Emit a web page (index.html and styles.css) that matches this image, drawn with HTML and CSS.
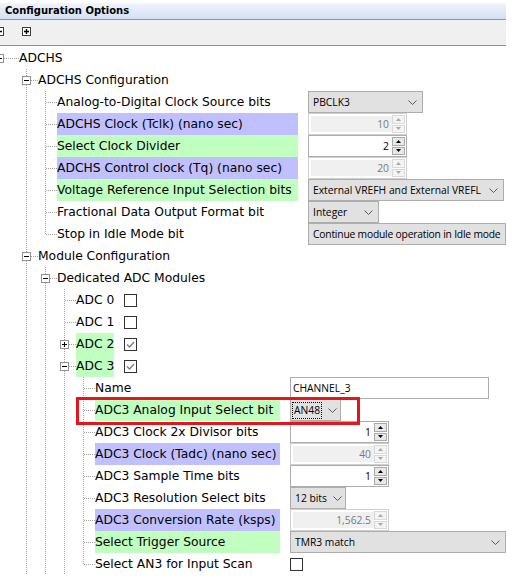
FILE: index.html
```html
<!doctype html>
<html lang="en">
<head>
	<meta charset="utf-8" />
	<title>
		Configuration Options
	</title>

	<link rel="stylesheet" href="styles.css">
</head>
<body>

	<!-- BEGIN: Panel. -->
	<section class="panel">

		<div class="panel__title">
			Configuration Options
		</div>

		<div class="panel__toolbar">
			<svg class="tool-btn tool-btn--first" width="9" height="9" viewBox="0 0 9 9">
				<rect x="0.5" y="0.5" width="8" height="8" fill="#ffffff" stroke="#3c3c3c" />
				<path d="M2 4.5 H7" stroke="#000000" stroke-width="1.4" />
			</svg>
			<svg class="tool-btn" width="9" height="9" viewBox="0 0 9 9">
				<rect x="0.5" y="0.5" width="8" height="8" fill="#ffffff" stroke="#3c3c3c" />
				<path d="M2 4.5 H7 M4.5 2 V7" stroke="#000000" stroke-width="1.4" />
			</svg>
		</div>

		<!-- BEGIN: Tree. -->
		<ul class="tree">
			<li class="tree__item tree__item--root">
				<div class="node node--root">
					<svg class="toggle" width="9" height="9" viewBox="0 0 9 9"><rect x="0.5" y="0.5" width="8" height="8" fill="#ffffff" stroke="#919191" /><path d="M2 4.5 H7" stroke="#000000" /></svg>
					<span class="node__label">ADCHS</span>
				</div>

				<ul>
					<li class="tree__item">
						<div class="node">
							<svg class="toggle" width="9" height="9" viewBox="0 0 9 9"><rect x="0.5" y="0.5" width="8" height="8" fill="#ffffff" stroke="#919191" /><path d="M2 4.5 H7" stroke="#000000" /></svg>
							<span class="node__label">ADCHS Configuration</span>
						</div>

						<ul class="props">
							<li class="tree__item">
								<div class="node">
									<span class="node__label">Analog-to-Digital Clock Source bits</span>
									<div class="node__value">
										<span class="combo combo--clock">
											PBCLK3
											<svg class="combo__arrow" width="9" height="5" viewBox="0 0 9 5"><polyline points="0.5,0.5 4.5,4.5 8.5,0.5" fill="none" stroke="#5a5a5a" /></svg>
										</span>
									</div>
								</div>
							</li>
							<li class="tree__item">
								<div class="node">
									<span class="node__label node__label--calc">ADCHS Clock (Tclk) (nano sec)</span>
									<div class="node__value">
										<span class="spin spin--off">
											<span class="spin__field">10</span>
											<span class="spin__buttons">
												<span class="spin__btn"><svg width="5" height="3" viewBox="0 0 5 3"><polygon points="0,3 2.5,0 5,3" /></svg></span>
												<span class="spin__btn"><svg width="5" height="3" viewBox="0 0 5 3"><polygon points="0,0 5,0 2.5,3" /></svg></span>
											</span>
										</span>
									</div>
								</div>
							</li>
							<li class="tree__item">
								<div class="node">
									<span class="node__label node__label--set">Select Clock Divider</span>
									<div class="node__value">
										<span class="spin">
											<span class="spin__field">2</span>
											<span class="spin__buttons">
												<span class="spin__btn"><svg width="5" height="3" viewBox="0 0 5 3"><polygon points="0,3 2.5,0 5,3" /></svg></span>
												<span class="spin__btn"><svg width="5" height="3" viewBox="0 0 5 3"><polygon points="0,0 5,0 2.5,3" /></svg></span>
											</span>
										</span>
									</div>
								</div>
							</li>
							<li class="tree__item">
								<div class="node">
									<span class="node__label node__label--calc">ADCHS Control clock (Tq) (nano sec)</span>
									<div class="node__value">
										<span class="spin spin--off">
											<span class="spin__field">20</span>
											<span class="spin__buttons">
												<span class="spin__btn"><svg width="5" height="3" viewBox="0 0 5 3"><polygon points="0,3 2.5,0 5,3" /></svg></span>
												<span class="spin__btn"><svg width="5" height="3" viewBox="0 0 5 3"><polygon points="0,0 5,0 2.5,3" /></svg></span>
											</span>
										</span>
									</div>
								</div>
							</li>
							<li class="tree__item">
								<div class="node">
									<span class="node__label node__label--set">Voltage Reference Input Selection bits</span>
									<div class="node__value">
										<span class="combo combo--vref">
											External VREFH and External VREFL
											<svg class="combo__arrow" width="9" height="5" viewBox="0 0 9 5"><polyline points="0.5,0.5 4.5,4.5 8.5,0.5" fill="none" stroke="#5a5a5a" /></svg>
										</span>
									</div>
								</div>
							</li>
							<li class="tree__item">
								<div class="node">
									<span class="node__label">Fractional Data Output Format bit</span>
									<div class="node__value">
										<span class="combo combo--format">
											Integer
											<svg class="combo__arrow" width="9" height="5" viewBox="0 0 9 5"><polyline points="0.5,0.5 4.5,4.5 8.5,0.5" fill="none" stroke="#5a5a5a" /></svg>
										</span>
									</div>
								</div>
							</li>
							<li class="tree__item tree__item--last">
								<div class="node">
									<span class="node__label">Stop in Idle Mode bit</span>
									<div class="node__value">
										<span class="combo combo--idle">
											Continue module operation in Idle mode
										</span>
									</div>
								</div>
							</li>
						</ul>
					</li>

					<li class="tree__item">
						<div class="node">
							<svg class="toggle" width="9" height="9" viewBox="0 0 9 9"><rect x="0.5" y="0.5" width="8" height="8" fill="#ffffff" stroke="#919191" /><path d="M2 4.5 H7" stroke="#000000" /></svg>
							<span class="node__label">Module Configuration</span>
						</div>

						<ul>
							<li class="tree__item">
								<div class="node">
									<svg class="toggle" width="9" height="9" viewBox="0 0 9 9"><rect x="0.5" y="0.5" width="8" height="8" fill="#ffffff" stroke="#919191" /><path d="M2 4.5 H7" stroke="#000000" /></svg>
									<span class="node__label">Dedicated ADC Modules</span>
								</div>

								<ul>
									<li class="tree__item">
										<div class="node">
											<span class="node__label node__label--fit">ADC 0</span>
											<svg class="check" width="13" height="13" viewBox="0 0 13 13"><rect x="0.5" y="0.5" width="12" height="12" fill="#ffffff" stroke="#333333" /></svg>
										</div>
									</li>
									<li class="tree__item">
										<div class="node">
											<span class="node__label node__label--fit">ADC 1</span>
											<svg class="check" width="13" height="13" viewBox="0 0 13 13"><rect x="0.5" y="0.5" width="12" height="12" fill="#ffffff" stroke="#333333" /></svg>
										</div>
									</li>
									<li class="tree__item">
										<div class="node">
											<svg class="toggle" width="9" height="9" viewBox="0 0 9 9"><rect x="0.5" y="0.5" width="8" height="8" fill="#ffffff" stroke="#919191" /><path d="M2 4.5 H7 M4.5 2 V7" stroke="#000000" /></svg>
											<span class="node__label node__label--fit node__label--set">ADC 2</span>
											<svg class="check" width="13" height="13" viewBox="0 0 13 13"><rect x="0.5" y="0.5" width="12" height="12" fill="#ffffff" stroke="#333333" /><polyline points="3,6.5 5.5,9 10,4" fill="none" stroke="#7c7c7c" stroke-width="1.3" /></svg>
										</div>
									</li>
									<li class="tree__item">
										<div class="node">
											<svg class="toggle" width="9" height="9" viewBox="0 0 9 9"><rect x="0.5" y="0.5" width="8" height="8" fill="#ffffff" stroke="#919191" /><path d="M2 4.5 H7" stroke="#000000" /></svg>
											<span class="node__label node__label--fit node__label--set">ADC 3</span>
											<svg class="check" width="13" height="13" viewBox="0 0 13 13"><rect x="0.5" y="0.5" width="12" height="12" fill="#ffffff" stroke="#333333" /><polyline points="3,6.5 5.5,9 10,4" fill="none" stroke="#7c7c7c" stroke-width="1.3" /></svg>
										</div>

										<ul class="props props--adc">
											<li class="tree__item">
												<div class="node">
													<span class="node__label">Name</span>
													<div class="node__value">
														<span class="text-field">CHANNEL_3</span>
													</div>
												</div>
											</li>
											<li class="tree__item">
												<div class="node node--marked">
													<span class="node__label node__label--set">ADC3 Analog Input Select bit</span>
													<div class="node__value">
														<span class="combo combo--input">
															<span class="combo__focus">AN48</span>
															<svg class="combo__arrow" width="9" height="5" viewBox="0 0 9 5"><polyline points="0.5,0.5 4.5,4.5 8.5,0.5" fill="none" stroke="#5a5a5a" /></svg>
														</span>
													</div>
													<span class="callout"></span>
												</div>
											</li>
											<li class="tree__item">
												<div class="node">
													<span class="node__label">ADC3 Clock 2x Divisor bits</span>
													<div class="node__value">
														<span class="spin">
															<span class="spin__field">1</span>
															<span class="spin__buttons">
																<span class="spin__btn"><svg width="5" height="3" viewBox="0 0 5 3"><polygon points="0,3 2.5,0 5,3" /></svg></span>
																<span class="spin__btn"><svg width="5" height="3" viewBox="0 0 5 3"><polygon points="0,0 5,0 2.5,3" /></svg></span>
															</span>
														</span>
													</div>
												</div>
											</li>
											<li class="tree__item">
												<div class="node">
													<span class="node__label node__label--calc">ADC3 Clock (Tadc) (nano sec)</span>
													<div class="node__value">
														<span class="spin spin--off">
															<span class="spin__field">40</span>
															<span class="spin__buttons">
																<span class="spin__btn"><svg width="5" height="3" viewBox="0 0 5 3"><polygon points="0,3 2.5,0 5,3" /></svg></span>
																<span class="spin__btn"><svg width="5" height="3" viewBox="0 0 5 3"><polygon points="0,0 5,0 2.5,3" /></svg></span>
															</span>
														</span>
													</div>
												</div>
											</li>
											<li class="tree__item">
												<div class="node">
													<span class="node__label">ADC3 Sample Time bits</span>
													<div class="node__value">
														<span class="spin">
															<span class="spin__field">1</span>
															<span class="spin__buttons">
																<span class="spin__btn"><svg width="5" height="3" viewBox="0 0 5 3"><polygon points="0,3 2.5,0 5,3" /></svg></span>
																<span class="spin__btn"><svg width="5" height="3" viewBox="0 0 5 3"><polygon points="0,0 5,0 2.5,3" /></svg></span>
															</span>
														</span>
													</div>
												</div>
											</li>
											<li class="tree__item">
												<div class="node">
													<span class="node__label">ADC3 Resolution Select bits</span>
													<div class="node__value">
														<span class="combo combo--bits">
															12 bits
															<svg class="combo__arrow" width="9" height="5" viewBox="0 0 9 5"><polyline points="0.5,0.5 4.5,4.5 8.5,0.5" fill="none" stroke="#5a5a5a" /></svg>
														</span>
													</div>
												</div>
											</li>
											<li class="tree__item">
												<div class="node">
													<span class="node__label node__label--calc">ADC3 Conversion Rate (ksps)</span>
													<div class="node__value">
														<span class="spin spin--off">
															<span class="spin__field">1,562.5</span>
															<span class="spin__buttons">
																<span class="spin__btn"><svg width="5" height="3" viewBox="0 0 5 3"><polygon points="0,3 2.5,0 5,3" /></svg></span>
																<span class="spin__btn"><svg width="5" height="3" viewBox="0 0 5 3"><polygon points="0,0 5,0 2.5,3" /></svg></span>
															</span>
														</span>
													</div>
												</div>
											</li>
											<li class="tree__item">
												<div class="node">
													<span class="node__label node__label--set">Select Trigger Source</span>
													<div class="node__value">
														<span class="combo combo--trigger">
															TMR3 match
															<svg class="combo__arrow" width="9" height="5" viewBox="0 0 9 5"><polyline points="0.5,0.5 4.5,4.5 8.5,0.5" fill="none" stroke="#5a5a5a" /></svg>
														</span>
													</div>
												</div>
											</li>
											<li class="tree__item tree__item--last">
												<div class="node">
													<span class="node__label">Select AN3 for Input Scan</span>
													<div class="node__value">
														<svg class="check check--value" width="13" height="13" viewBox="0 0 13 13"><rect x="0.5" y="0.5" width="12" height="12" fill="#ffffff" stroke="#333333" /></svg>
													</div>
												</div>
											</li>
										</ul>
									</li>
								</ul>
							</li>
						</ul>
					</li>
				</ul>
			</li>
		</ul>
		<!-- END: Tree. -->

	</section>
	<!-- END: Panel. -->

</body>
</html>
```

FILE: styles.css
```css
html {
	box-sizing: border-box ;
}

*, *:before, *:after {
	box-sizing: inherit ;
}

body {
	background-color: #ffffff ;
	color: #000000 ;
	margin: 0px 0px 0px 0px ;
	overflow: hidden ;
}

/* BEGIN: Panel chrome. */
.panel {
	padding: 3px 0px 0px 0px ;
	width: 506px ;
}

.panel__title {
	background-image: linear-gradient( to bottom, #f1f5fc, #d3dff4 ) ;
	border-bottom: 1px solid #8497b6 ;
	font: bold 10px "DejaVu Sans", sans-serif ;
	height: 17px ;
	line-height: 16px ;
	padding: 0px 0px 0px 5px ;
}

.panel__toolbar {
	align-items: flex-start ;
	background-color: #f0f0f0 ;
	border-bottom: 1px solid #8e8e8e ;
	display: flex ;
	gap: 18px ;
	height: 26px ;
	padding: 7px 0px 0px 0px ;
}

.tool-btn {
	display: block ;
	flex: none ;
}

.tool-btn--first {
	margin-left: -5px ;
}
/* END: Panel chrome. */

/* BEGIN: Tree. */
.tree,
.tree ul {
	list-style: none ;
	margin: 0px 0px 0px 0px ;
	padding: 0px 0px 0px 0px ;
}

.tree {
	font: 12.3px "DejaVu Sans", sans-serif ;
	overflow: hidden ;
	padding-top: 1px ;
}

.tree ul {
	margin-left: 19px ;
}

.tree > li > ul {
	margin-left: 26px ;
}

/* The vertical guide runs the whole item, the last one stops at its own row. */
.tree__item {
	background-image: repeating-linear-gradient( to bottom, #a0a0a0 0px, #a0a0a0 1px, transparent 1px, transparent 2px ) ;
	background-position: 0px 0px ;
	background-repeat: no-repeat ;
	background-size: 1px 100% ;
}

.tree__item--last {
	background-size: 1px 12px ;
}

.tree__item--root {
	background-image: none ;
}

.node {
	align-items: center ;
	background-image: repeating-linear-gradient( to right, #a0a0a0 0px, #a0a0a0 1px, transparent 1px, transparent 2px ) ;
	background-position: 1px 11px ;
	background-repeat: no-repeat ;
	background-size: 11px 1px ;
	display: flex ;
	height: 22px ;
	padding-left: 12px ;
	white-space: nowrap ;
}

.node--root {
	background-size: 19px 1px ;
	background-position: 0px 11px ;
	padding-left: 0px ;
}

.toggle {
	display: block ;
	flex: none ;
	margin: 0px 7px 0px -16px ;
}

.node--root .toggle {
	margin: 0px 15px 0px -5px ;
}

.node__label {
	align-self: stretch ;
	flex: 1 1 auto ;
	line-height: 22px ;
	min-width: 0px ;
	overflow: hidden ;
}

.node__label--fit {
	flex: 0 0 auto ;
}

.node__label--calc {
	background-color: #c0c0ff ;
}

.node__label--set {
	background-color: #c0ffc0 ;
}

.check {
	display: block ;
	flex: none ;
	margin-left: 10px ;
}

.check--value {
	margin-left: 0px ;
}
/* END: Tree. */

/* BEGIN: Value editors. */
.node__value {
	align-items: center ;
	display: flex ;
	flex: none ;
	font: 10.3px "Open Sans", sans-serif ;
	height: 22px ;
	margin-left: 10px ;
	width: 198px ;
}

.props--adc .node__value {
	width: 216px ;
}

.combo {
	align-items: center ;
	background-color: #e1e1e1 ;
	border: 1px solid #adadad ;
	display: flex ;
	height: 22px ;
	justify-content: space-between ;
	overflow: hidden ;
	padding: 0px 5px 0px 4px ;
}

.combo__arrow {
	display: block ;
	flex: none ;
	margin-left: 6px ;
}

.combo--clock {
	width: 115px ;
}

.combo--vref {
	width: 196px ;
}

.combo--format {
	width: 71px ;
}

.combo--idle {
	letter-spacing: -0.2px ;
	padding-right: 2px ;
	width: 198px ;
}

.combo--input {
	padding-left: 1px ;
	width: 51px ;
}

.combo--bits {
	width: 56px ;
}

.combo--trigger {
	width: 216px ;
}

.combo__focus {
	border: 1px dotted #000000 ;
	line-height: 15px ;
	padding: 0px 1px 0px 1px ;
}

.text-field {
	align-items: center ;
	background-color: #ffffff ;
	border: 1px solid #adadad ;
	display: flex ;
	height: 22px ;
	padding: 0px 0px 0px 2px ;
	width: 199px ;
}

.spin {
	background-color: #ffffff ;
	border: 1px solid #adadad ;
	display: flex ;
	height: 22px ;
	width: 99px ;
}

.spin__field {
	align-items: center ;
	display: flex ;
	flex: 1 1 auto ;
	justify-content: flex-end ;
	padding: 0px 3px 0px 0px ;
}

.spin__buttons {
	display: flex ;
	flex: none ;
	flex-direction: column ;
	gap: 1px ;
	padding: 1px 1px 1px 0px ;
	width: 14px ;
}

.spin__btn {
	align-items: center ;
	background-color: #e8e8e8 ;
	border: 1px solid #a9a9a9 ;
	display: flex ;
	flex: 1 1 0px ;
	justify-content: center ;
}

.spin__btn svg {
	display: block ;
	fill: #000000 ;
}

.spin--off {
	border-color: #d0d0d0 ;
}

.spin--off .spin__field {
	background-color: #f0f0f0 ;
	color: #7a7a7a ;
	margin: 2px 0px 2px 2px ;
}

.spin--off .spin__btn {
	background-color: #f4f4f4 ;
	border-color: #d9d9d9 ;
}

.spin--off .spin__btn svg {
	fill: #a8a8a8 ;
}
/* END: Value editors. */

/* BEGIN: Red call-out drawn over the picked row. */
.node--marked {
	position: relative ;
}

.callout {
	border: 3px solid #e3151e ;
	height: 28px ;
	left: -7px ;
	position: absolute ;
	top: -2px ;
	width: 284px ;
}
/* END: Red call-out. */
```
